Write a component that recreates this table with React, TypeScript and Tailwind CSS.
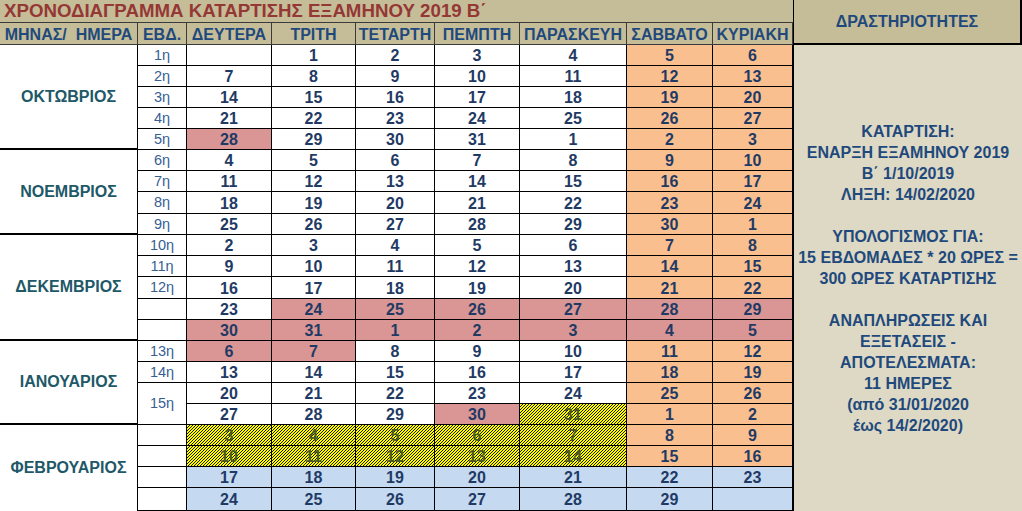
import React from "react";

type Row = {
  wk?: string;
  wkSpan?: boolean;
  noWk?: boolean;
  month?: string;
  monthSpan?: number;
  monthLast?: boolean;
  days: string[];
  colors: string;
};

const r = (s: string) => s.split(",");

const ROWS: Row[] = [
  { month: "ΟΚΤΩΒΡΙΟΣ", monthSpan: 5, wk: "1η", days: r(",1,2,3,4,5,6"), colors: "wwwwwoo" },
  { wk: "2η", days: r("7,8,9,10,11,12,13"), colors: "wwwwwoo" },
  { wk: "3η", days: r("14,15,16,17,18,19,20"), colors: "wwwwwoo" },
  { wk: "4η", days: r("21,22,23,24,25,26,27"), colors: "wwwwwoo" },
  { wk: "5η", days: r("28,29,30,31,1,2,3"), colors: "pwwwwoo" },
  { month: "ΝΟΕΜΒΡΙΟΣ", monthSpan: 4, wk: "6η", days: r("4,5,6,7,8,9,10"), colors: "wwwwwoo" },
  { wk: "7η", days: r("11,12,13,14,15,16,17"), colors: "wwwwwoo" },
  { wk: "8η", days: r("18,19,20,21,22,23,24"), colors: "wwwwwoo" },
  { wk: "9η", days: r("25,26,27,28,29,30,1"), colors: "wwwwwoo" },
  { month: "ΔΕΚΕΜΒΡΙΟΣ", monthSpan: 5, wk: "10η", days: r("2,3,4,5,6,7,8"), colors: "wwwwwoo" },
  { wk: "11η", days: r("9,10,11,12,13,14,15"), colors: "wwwwwoo" },
  { wk: "12η", days: r("16,17,18,19,20,21,22"), colors: "wwwwwoo" },
  { wk: "", days: r("23,24,25,26,27,28,29"), colors: "wpppppp" },
  { wk: "", days: r("30,31,1,2,3,4,5"), colors: "ppppppp" },
  { month: "ΙΑΝΟΥΑΡΙΟΣ", monthSpan: 4, wk: "13η", days: r("6,7,8,9,10,11,12"), colors: "ppwwwoo" },
  { wk: "14η", days: r("13,14,15,16,17,18,19"), colors: "wwwwwoo" },
  { wk: "15η", wkSpan: true, days: r("20,21,22,23,24,25,26"), colors: "wwwwwoo" },
  { noWk: true, days: r("27,28,29,30,31,1,2"), colors: "wwwphoo" },
  { month: "ΦΕΒΡΟΥΑΡΙΟΣ", monthSpan: 4, monthLast: true, wk: "", days: r("3,4,5,6,7,8,9"), colors: "hhhhhoo" },
  { wk: "", days: r("10,11,12,13,14,15,16"), colors: "hhhhhoo" },
  { wk: "", days: r("17,18,19,20,21,22,23"), colors: "bbbbbbb" },
  { wk: "", days: r("24,25,26,27,28,29,"), colors: "bbbbbbb" },
];

const COLOR: Record<string, string> = {
  w: "bg-white text-[#1f3a64]",
  o: "bg-[#fabf8f] text-[#1f3a64]",
  p: "bg-[#da9694] text-[#1f3a64]",
  b: "bg-[#c5d9f1] text-[#1f3a64]",
  h: "bg-[#ffff00] text-[#4a5a22]",
};

const HEAD = ["ΜΗΝΑΣ/  ΗΜΕΡΑ", "ΕΒΔ.", "ΔΕΥΤΕΡΑ", "ΤΡΙΤΗ", "ΤΕΤΑΡΤΗ", "ΠΕΜΠΤΗ", "ΠΑΡΑΣΚΕΥΗ", "ΣΑΒΒΑΤΟ", "ΚΥΡΙΑΚΗ"];

const PANEL = [
  "ΚΑΤΑΡΤΙΣΗ:",
  "ΕΝΑΡΞΗ ΕΞΑΜΗΝΟΥ 2019",
  "Β΄ 1/10/2019",
  "ΛΗΞΗ: 14/02/2020",
  "",
  "ΥΠΟΛΟΓΙΣΜΟΣ ΓΙΑ:",
  "15 ΕΒΔΟΜΑΔΕΣ * 20 ΩΡΕΣ =",
  "300 ΩΡΕΣ ΚΑΤΑΡΤΙΣΗΣ",
  "",
  "ΑΝΑΠΛΗΡΩΣΕΙΣ ΚΑΙ",
  "ΕΞΕΤΑΣΕΙΣ -",
  "ΑΠΟΤΕΛΕΣΜΑΤΑ:",
  "11 ΗΜΕΡΕΣ",
  "(από 31/01/2020",
  "έως 14/2/2020)",
];

function Hatch({ id }: { id: string }) {
  return (
    <svg className="absolute inset-0 w-full h-full" shapeRendering="crispEdges" aria-hidden="true">
      <defs>
        <pattern id={id} width="3" height="3" patternUnits="userSpaceOnUse">
          <rect x="2" y="0" width="1" height="1" fill="#111" />
          <rect x="1" y="1" width="1" height="1" fill="#111" />
          <rect x="0" y="2" width="1" height="1" fill="#111" />
        </pattern>
      </defs>
      <rect width="100%" height="100%" fill={`url(#${id})`} />
    </svg>
  );
}

export default function App() {
  const cells: React.ReactNode[] = [];
  cells.push(
    <div
      key="title"
      className="col-span-9 bg-[#c4bd97] border-b border-[#3a3a3a] flex items-center pl-1 text-[18.7px] font-bold text-[#953735] leading-none whitespace-nowrap"
    >
      ΧΡΟΝΟΔΙΑΓΡΑΜΜΑ ΚΑΤΑΡΤΙΣΗΣ ΕΞΑΜΗΝΟΥ 2019 Β΄
    </div>
  );
  HEAD.forEach((h, i) => {
    cells.push(
      <div
        key={"h" + i}
        className="bg-[#c4bd97] border-b border-r border-[#3a3a3a] flex items-center justify-center pt-[2px] text-[16px] font-bold text-[#1f497d] whitespace-pre overflow-hidden leading-none"
      >
        {h}
      </div>
    );
  });
  ROWS.forEach((row, ri) => {
    if (row.month) {
      const span = row.monthSpan === 5 ? "row-span-5" : "row-span-4";
      cells.push(
        <div
          key={"m" + ri}
          className={`${span} bg-white border-r border-black ${row.monthLast ? "" : "border-b-2"} border-b-black flex items-center justify-center text-[16px] font-bold text-[#215868]`}
        >
          {row.month}
        </div>
      );
    }
    if (!row.noWk) {
      cells.push(
        <div
          key={"w" + ri}
          className={`${row.wkSpan ? "row-span-2" : ""} bg-white border-r border-b border-black flex items-center justify-center pt-px text-[14.5px] text-[#366092]`}
        >
          {row.wk}
        </div>
      );
    }
    row.days.forEach((d, di) => {
      const c = row.colors[di];
      cells.push(
        <div
          key={"d" + ri + "-" + di}
          className={`${COLOR[c]} relative border-r border-b border-black flex items-center justify-center pt-[2px] text-[16px] font-bold leading-none`}
        >
          {c === "h" && <Hatch id={`hatch-${ri}-${di}`} />}
          <span className="relative">{d}</span>
        </div>
      );
    });
  });

  return (
    <div className="w-[1022px] h-[511px] overflow-hidden flex bg-white font-['Liberation_Sans',Arial,sans-serif]">
      <div className="w-[793px] shrink-0 grid grid-cols-[138px_49px_85px_84px_79px_85px_107px_86px_80px] grid-rows-[23px_22px_21px_21px_21px_21px_21px_21px_21px_22px_21px_21px_21px_22px_21px_21px_21px_21px_21px_21px_21px_21px_21px_23px]">
        {cells}
      </div>
      <div className="flex-1 flex flex-col border-l border-black">
        <div className="h-[45px] shrink-0 bg-[#c4bd97] border-b-2 border-r-2 border-black flex items-center justify-center text-[16px] font-bold text-[#1f497d]">
          ΔΡΑΣΤΗΡΙΟΤΗΤΕΣ
        </div>
        <div className="flex-1 bg-[#ddd9c4] flex flex-col items-center justify-center text-[16px] font-bold text-[#1f497d] leading-[21px] whitespace-nowrap">
          {PANEL.map((t, i) => (
            <div key={i} className="h-[21px]">
              {t}
            </div>
          ))}
        </div>
      </div>
    </div>
  );
}
